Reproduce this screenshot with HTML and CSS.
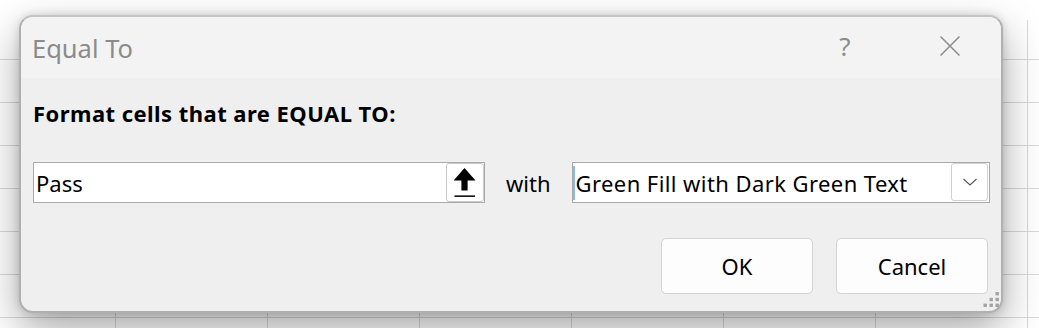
FILE: index.html
```html
<!DOCTYPE html>
<html lang="en">
<head>
	<meta charset="UTF-8">
	<title>Equal To</title>
	<link rel="stylesheet" href="styles.css">
</head>
<body>
	<div class="dialog">
		<div class="titlebar">
			<span class="title">Equal To</span>
			<span class="help">?</span>
			<span class="close">
				<svg width="20" height="20" viewBox="0 0 20 20"><path d="M0.5 0.5 L19.5 19.5 M19.5 0.5 L0.5 19.5" stroke="#8c8c8c" stroke-width="1.5" fill="none"/></svg>
			</span>
		</div>
		<div class="content">
			<p class="heading">Format cells that are EQUAL TO:</p>
			<div class="row">
				<div class="field">
					<span class="value">Pass</span>
					<span class="pick">
						<svg width="22" height="29" viewBox="0 0 22 29"><path d="M10.5 0 L21.5 12.5 L13.6 12.5 L13.6 22.5 L7.4 22.5 L7.4 12.5 L-0.5 12.5 Z" fill="#000"/><rect x="0.5" y="27.4" width="20.5" height="1.5" fill="#000"/></svg>
					</span>
				</div>
				<span class="with">with</span>
				<div class="combo">
					<span class="caret"></span>
					<span class="value">Green Fill with Dark Green Text</span>
					<span class="drop">
						<svg width="14" height="8" viewBox="0 0 14 8"><path d="M0.5 1 L7 7 L13.5 1" stroke="#555" stroke-width="1.1" fill="none"/></svg>
					</span>
				</div>
			</div>
			<div class="actions">
				<button class="btn">OK</button>
				<button class="btn">Cancel</button>
			</div>
		</div>
		<!-- resize grip -->
		<svg class="grip" width="16" height="16" viewBox="0 0 16 16">
			<rect x="12.5" y="1" width="3.4" height="3.4"/>
			<rect x="6.5" y="6.8" width="3.4" height="3.4"/>
			<rect x="12.5" y="6.8" width="3.4" height="3.4"/>
			<rect x="0.5" y="12.6" width="3.4" height="3.4"/>
			<rect x="6.5" y="12.6" width="3.4" height="3.4"/>
			<rect x="12.5" y="12.6" width="3.4" height="3.4"/>
		</svg>
	</div>
</body>
</html>
```

FILE: styles.css
```css
body{
	margin: 0;
	height: 328px;
	overflow: hidden;
	font-family: "Noto Sans", "Open Sans", sans-serif;
	background:
		linear-gradient(#fff, #fff) 0 0/100% 20px no-repeat,
		linear-gradient(90deg, #d9d9d9 1px, transparent 1px) 115px 0/152px 100%,
		linear-gradient(#d9d9d9 1px, transparent 1px) 0 59px/100% 43px,
		#fff;
}
/* dialog 984*298 */
.dialog{
	position: relative;
	box-sizing: border-box;
	width: 984px;
	height: 298px;
	margin: 15px 0 0 19px;
	border: 2px solid #b0b0b0;
	border-top-color: #c4c4c4;
	border-radius: 14px;
	background: #efefef;
	box-shadow: 0 16px 40px rgba(0,0,0,.35), 0 0 8px rgba(0,0,0,.15);
}
.titlebar{
	display: flex;
	align-items: flex-start;
	height: 61px;
	box-sizing: border-box;
	padding: 14px 0 0 11px;
	background: #f3f3f3;
	border-radius: 12px 12px 0 0;
	color: #8b8b8b;
}
.title{
	flex: 1;
	font-size: 25.5px;
	line-height: 34px;
}
.help{
	width: 46px;
	margin-right: 59px;
	text-align: center;
	font-size: 26px;
	line-height: 30px;
}
.close{
	width: 46px;
	margin-right: 28px;
	text-align: center;
}
.close svg{
	display: block;
	margin: 5px auto 0;
}
.content{
	padding: 0 11px 0 12px;
}
.heading{
	margin: 20px 0 0;
	font-size: 22px;
	font-weight: bold;
	letter-spacing: .45px;
	line-height: 30px;
	color: #000;
}
.row{
	display: flex;
	align-items: center;
	height: 41px;
	margin-top: 34px;
	font-size: 22px;
	line-height: 30px;
	color: #000;
}
.field{
	display: flex;
	align-items: center;
	box-sizing: border-box;
	width: 452px;
	height: 41px;
	padding-left: 2px;
	border: 1px solid #aaa;
	background: #fff;
}
.pick{
	display: flex;
	align-items: center;
	justify-content: center;
	box-sizing: border-box;
	width: 38px;
	height: 39px;
	margin-left: auto;
	border: 1px solid #c8c8c8;
	border-radius: 3px;
	background: #fff;
}
.with{
	margin: 0 21px;
}
.combo{
	flex: 1;
	display: flex;
	align-items: center;
	box-sizing: border-box;
	height: 41px;
	border: 1px solid #a9a9a9;
	background: #fff;
}
.caret{
	width: 2px;
	height: 34px;
	background: #86bbe8;
}
.combo .value{
	margin-left: 1px;
	letter-spacing: .42px;
}
.drop{
	display: flex;
	align-items: center;
	justify-content: center;
	align-self: flex-start;
	box-sizing: border-box;
	width: 37px;
	height: 38px;
	margin: 0 1px 0 auto;
	border: 1px solid #d0d0d0;
	border-radius: 3px;
	background: #fff;
}
.actions{
	display: flex;
	justify-content: flex-end;
	gap: 23px;
	margin-top: 35px;
	padding-right: 2px;
}
.btn{
	width: 152px;
	height: 56px;
	padding: 0;
	border: 1px solid #d3d3d3;
	border-radius: 5px;
	background: #fdfdfd;
	font-family: inherit;
	font-size: 22px;
	color: #000;
}
.grip{
	position: absolute;
	right: 2px;
	bottom: 4px;
	fill: #a3a3a3;
}
```
